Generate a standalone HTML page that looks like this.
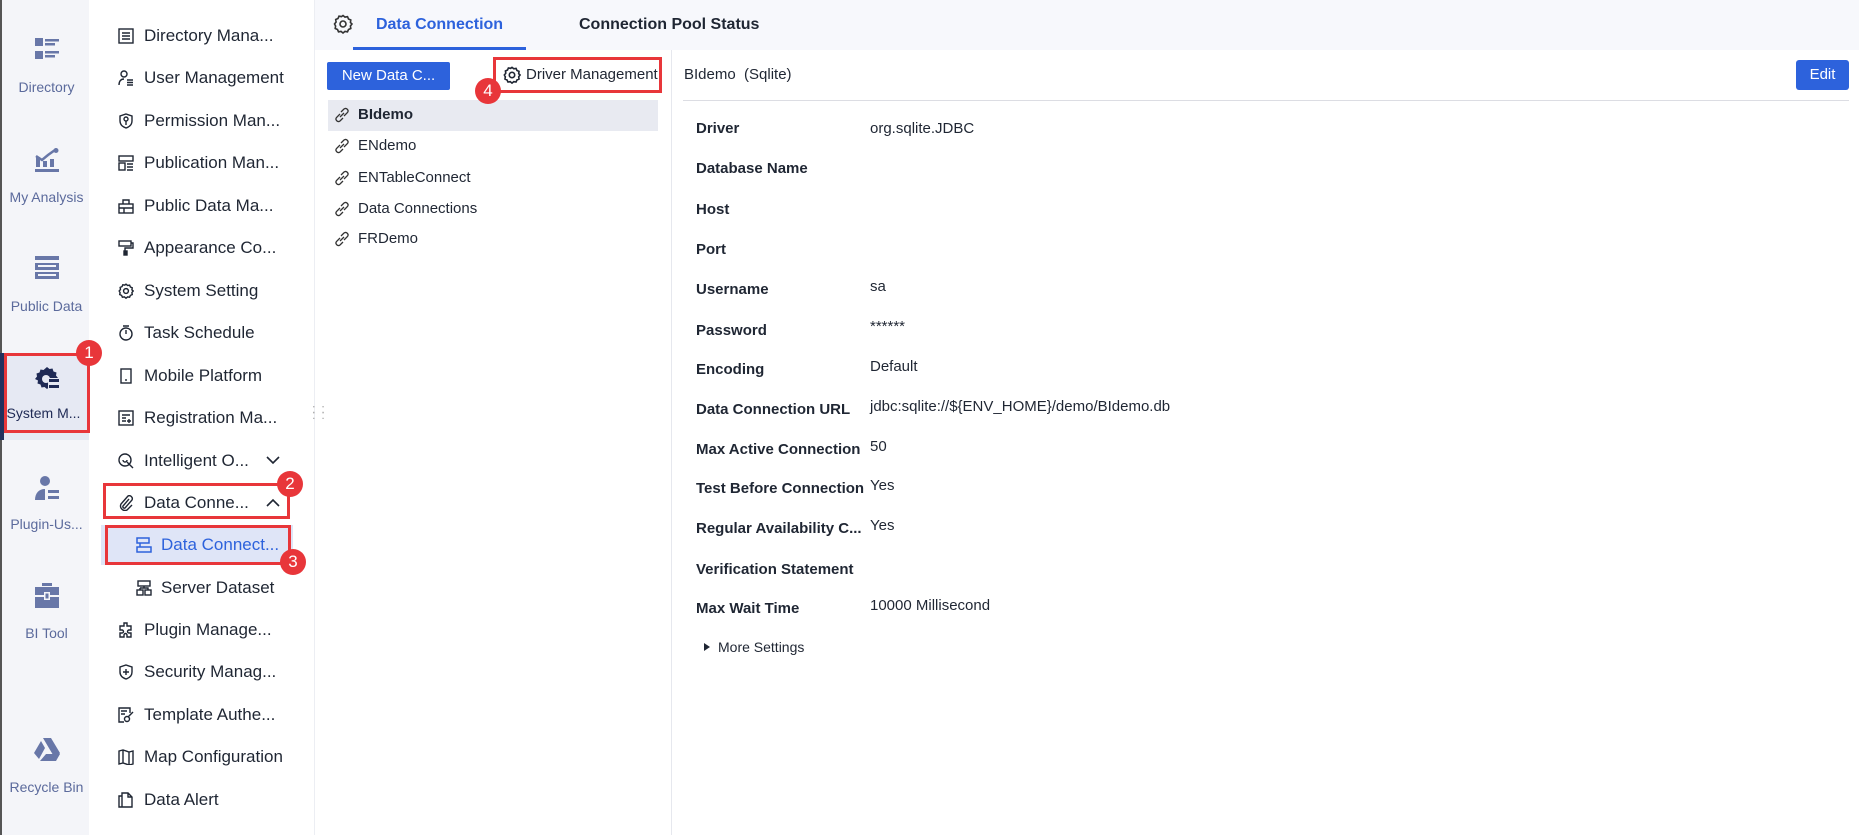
<!DOCTYPE html>
<html><head><meta charset="utf-8"><style>
*{margin:0;padding:0;box-sizing:border-box}
body{width:1859px;height:835px;overflow:hidden;background:#fff;font-family:"Liberation Sans",Arial,sans-serif;position:relative;color:#1f2633}
.abs{position:absolute}
#rail{left:0;top:0;width:89px;height:835px;background:#f4f5f9;border-left:2px solid #555}
.ri{position:absolute;left:0;width:89px;text-align:center;color:#5b6a9c;font-size:14px}
.ri svg{display:block;margin:0 auto}
#side{left:89px;top:0;width:226px;height:835px;background:#fff;border-right:1px solid #eceef3}
.si{position:absolute;left:0;width:226px;height:30px;font-size:17px;line-height:30px;white-space:nowrap}
.si svg{position:absolute;left:29px;top:7px}
.si span{position:absolute;left:55px}
.badge{position:absolute;width:26px;height:26px;border-radius:50%;background:#e8363a;color:#fff;font-size:17px;line-height:26px;text-align:center}
.rbox{position:absolute;border:3px solid #e8363a}
.li{position:absolute;left:328px;width:330px;height:30px;font-size:15px;line-height:30px}
.li svg{position:absolute;left:6px;top:7px}
.li span{position:absolute;left:30px}
.row{position:absolute;left:696px;font-size:15px}
.row b{position:absolute;left:0;white-space:nowrap}
.row i{position:absolute;left:174px;font-style:normal;white-space:nowrap}
</style></head><body>
<div class="abs" style="left:0;top:0;width:1859px;height:3px;background:linear-gradient(#e9eaee,#f7f8fc)"></div>
<!-- tab bar -->
<div class="abs" style="left:315px;top:0;width:1544px;height:50px;background:#f7f8fc"></div>
<svg class="abs" style="left:333px;top:14px" width="20" height="20" viewBox="0 0 20 20" fill="none" stroke="#333" stroke-width="1.6"><path d="M10 1.5l2 1.6 2.5-.4 1 2.3 2.3 1-.4 2.5 1.6 1.5-1.6 2 .4 2.5-2.3 1-1 2.3-2.5-.4-2 1.6-2-1.6-2.5.4-1-2.3-2.3-1 .4-2.5L1.5 10l1.6-2-.4-2.5 2.3-1 1-2.3 2.5.4z"/><circle cx="10" cy="10" r="3"/></svg>
<div class="abs" style="left:353px;top:16px;width:173px;text-align:center;font-size:16px;font-weight:bold;color:#2d62dc">Data Connection</div>
<div class="abs" style="left:353px;top:47px;width:173px;height:3px;background:#2d62dc"></div>
<div class="abs" style="left:579px;top:16px;font-size:16px;font-weight:bold;color:#1f2633">Connection Pool Status</div>

<!-- rail -->
<div class="abs" id="rail">
<div class="abs" style="left:-2px;top:353px;width:89px;height:87px;background:#e6e9f3"></div>
<div class="abs" style="left:-2px;top:353px;width:4px;height:87px;background:#22305e"></div>
<div class="ri" style="top:38px"><svg width="24" height="22" viewBox="0 0 24 22" fill="#6877a8"><rect x="0" y="0" width="8" height="8"/><rect x="0" y="13" width="8" height="8"/><rect x="10" y="1" width="14" height="2.5"/><rect x="10" y="5" width="10" height="2.5"/><rect x="10" y="13" width="14" height="2.5"/><rect x="10" y="17" width="10" height="2.5"/></svg><div style="margin-top:19px">Directory</div></div>
<div class="ri" style="top:148px"><svg width="24" height="24" viewBox="0 0 24 24" fill="#6877a8"><rect x="0" y="21" width="24" height="3"/><rect x="1" y="9" width="4" height="10"/><rect x="8" y="13" width="4" height="6"/><rect x="15" y="11" width="4" height="8"/><path d="M1 8l6 4 6-5 7-5" stroke="#6877a8" stroke-width="2.5" fill="none"/><circle cx="21" cy="2.5" r="2.5"/></svg><div style="margin-top:17px">My Analysis</div></div>
<div class="ri" style="top:256px"><svg width="24" height="24" viewBox="0 0 24 24" fill="#6877a8"><rect x="0" y="0" width="24" height="4"/><rect x="0" y="7" width="24" height="7"/><rect x="3" y="9" width="18" height="2" fill="#f4f5f9"/><rect x="0" y="16" width="24" height="7"/><rect x="3" y="18" width="18" height="2" fill="#f4f5f9"/></svg><div style="margin-top:18px">Public Data</div></div>
<div class="ri" style="top:366px;color:#1f2a55;font-size:14px"><svg width="26" height="26" viewBox="0 0 26 26"><path d="M13 1l2.5 2 3-.5 1 3 3 1-.5 3 2 2.5-2 2.5.5 3-3 1-1 3-3-.5-2.5 2-2.5-2-3 .5-1-3-3-1 .5-3L1 13l2-2.5-.5-3 3-1 1-3 3 .5z" fill="#1f2a55"/><circle cx="12" cy="13" r="4" fill="#e6e9f3"/><rect x="14" y="12" width="12" height="14" fill="#e6e9f3"/><rect x="15" y="13" width="10" height="3" fill="#1f2a55"/><rect x="15" y="19" width="10" height="3" fill="#1f2a55"/></svg><div style="margin-top:13px;margin-left:-6px;white-space:nowrap">System M...</div></div>
<div class="ri" style="top:475px"><svg width="24" height="26" viewBox="0 0 24 26" fill="#6877a8"><circle cx="10" cy="6" r="5"/><path d="M0 25c0-7 4-11 10-11v11z"/><rect x="13" y="15" width="11" height="3"/><rect x="13" y="21" width="11" height="3"/></svg><div style="margin-top:15px">Plugin-Us...</div></div>
<div class="ri" style="top:583px"><svg width="24" height="26" viewBox="0 0 24 26" fill="#6877a8"><rect x="7" y="0" width="10" height="3"/><rect x="0" y="4" width="24" height="8"/><rect x="0" y="14" width="24" height="11"/><rect x="9" y="9" width="6" height="8" fill="#f4f5f9"/><rect x="10.5" y="10.5" width="3" height="5"/></svg><div style="margin-top:16px">BI Tool</div></div>
<div class="ri" style="top:738px"><svg width="26" height="24" viewBox="0 0 26 24" fill="#6877a8"><path d="M9 0h8l9 15-4 7z M7 3l4 7-6 11L0 15z M12 16h14l-4 7H6z"/></svg><div style="margin-top:17px">Recycle Bin</div></div>
</div>

<!-- side menu -->
<div class="abs" id="side">
<div class="abs" style="left:12px;top:525px;width:192px;height:40px;background:#dfe5f7"></div>
<div class="si" style="top:21px"><svg width="16" height="16" viewBox="0 0 16 16" fill="none" stroke="#1f2633" stroke-width="1.4"><rect x="1" y="1" width="14" height="14"/><path d="M4 5h8M4 8h8M4 11h8"/></svg><span>Directory Mana...</span></div>
<div class="si" style="top:63px"><svg width="16" height="16" viewBox="0 0 16 16" fill="none" stroke="#1f2633" stroke-width="1.4"><circle cx="6" cy="4" r="3"/><path d="M1 15c0-4 2-6 5-6M9 10h6M9 12.5h6M9 15h6"/></svg><span>User Management</span></div>
<div class="si" style="top:106px"><svg width="16" height="16" viewBox="0 0 16 16" fill="none" stroke="#1f2633" stroke-width="1.4"><path d="M8 1l6 2v5c0 4-3 6-6 7-3-1-6-3-6-7V3z"/><circle cx="8" cy="6" r="2"/><path d="M8 8v4"/></svg><span>Permission Man...</span></div>
<div class="si" style="top:148px"><svg width="16" height="16" viewBox="0 0 16 16" fill="none" stroke="#1f2633" stroke-width="1.4"><rect x="1" y="1" width="14" height="5"/><rect x="1" y="8" width="6" height="7"/><path d="M9 9h6M9 12h6M9 15h6"/></svg><span>Publication Man...</span></div>
<div class="si" style="top:191px"><svg width="16" height="16" viewBox="0 0 16 16" fill="none" stroke="#1f2633" stroke-width="1.4"><rect x="1" y="6" width="14" height="9"/><path d="M5 6V2h6v4M1 10h14M6 10v5"/></svg><span>Public Data Ma...</span></div>
<div class="si" style="top:233px"><svg width="16" height="16" viewBox="0 0 16 16" fill="none" stroke="#1f2633" stroke-width="1.4"><rect x="1" y="1" width="12" height="5"/><path d="M13 3h2v5H7v3"/><rect x="6" y="11" width="3" height="4" fill="#1f2633"/></svg><span>Appearance Co...</span></div>
<div class="si" style="top:276px"><svg width="16" height="16" viewBox="0 0 20 20" fill="none" stroke="#1f2633" stroke-width="1.8"><path d="M10 1.5l2 1.6 2.5-.4 1 2.3 2.3 1-.4 2.5 1.6 1.5-1.6 2 .4 2.5-2.3 1-1 2.3-2.5-.4-2 1.6-2-1.6-2.5.4-1-2.3-2.3-1 .4-2.5L1.5 10l1.6-2-.4-2.5 2.3-1 1-2.3 2.5.4z"/><circle cx="10" cy="10" r="3"/></svg><span>System Setting</span></div>
<div class="si" style="top:318px"><svg width="16" height="16" viewBox="0 0 16 16" fill="none" stroke="#1f2633" stroke-width="1.4"><circle cx="8" cy="9" r="6"/><path d="M5 1h6M8 5v4"/></svg><span>Task Schedule</span></div>
<div class="si" style="top:361px"><svg width="16" height="16" viewBox="0 0 16 16" fill="none" stroke="#1f2633" stroke-width="1.4"><rect x="3" y="1" width="10" height="14"/><path d="M7 12h2"/></svg><span>Mobile Platform</span></div>
<div class="si" style="top:403px"><svg width="16" height="16" viewBox="0 0 16 16" fill="none" stroke="#1f2633" stroke-width="1.4"><rect x="1" y="1" width="14" height="14"/><path d="M4 5h8M4 8h4M4 11h4M11 9v4M9 11h4"/></svg><span>Registration Ma...</span></div>
<div class="si" style="top:446px"><svg width="16" height="16" viewBox="0 0 16 16" fill="none" stroke="#1f2633" stroke-width="1.4"><circle cx="7" cy="7" r="6"/><path d="M5 7a2 2 0 104 0M9 9l6 6"/></svg><span>Intelligent O...</span><svg style="left:177px;top:10px" width="14" height="9" viewBox="0 0 14 9" fill="none" stroke="#1f2633" stroke-width="1.6"><path d="M1 1l6 6 6-6"/></svg></div>
<div class="si" style="top:488px"><svg width="16" height="16" viewBox="0 0 16 16" fill="none" stroke="#1f2633" stroke-width="1.4"><path d="M11 4L5 11a1.5 1.5 0 002 2l7-8a3 3 0 00-4-4L3 9a4.5 4.5 0 006 6l5-5"/></svg><span>Data Conne...</span><svg style="left:177px;top:10px" width="14" height="9" viewBox="0 0 14 9" fill="none" stroke="#1f2633" stroke-width="1.6"><path d="M1 8l6-6 6 6"/></svg></div>
<div class="si" style="top:530px;color:#2d62dc"><svg style="left:47px" width="16" height="16" viewBox="0 0 16 16" fill="none" stroke="#2d62dc" stroke-width="1.5"><rect x="1" y="1" width="12" height="5"/><rect x="1" y="10" width="14" height="5"/><path d="M4 6v4"/></svg><span style="left:72px">Data Connect...</span></div>
<div class="si" style="top:573px"><svg style="left:47px" width="16" height="16" viewBox="0 0 16 16" fill="none" stroke="#1f2633" stroke-width="1.4"><rect x="2" y="1" width="12" height="5"/><rect x="1" y="10" width="6" height="5"/><rect x="9" y="10" width="6" height="5"/><path d="M8 6v2M4 8h8v2M4 8v2"/></svg><span style="left:72px">Server Dataset</span></div>
<div class="si" style="top:615px"><svg width="16" height="16" viewBox="0 0 16 16" fill="none" stroke="#1f2633" stroke-width="1.4"><path d="M6 1h3v3h4v4h-2a1.5 1.5 0 000 3h2v4H9v-2a1.5 1.5 0 00-3 0v2H2v-4h2a1.5 1.5 0 000-3H2V4h4z"/></svg><span>Plugin Manage...</span></div>
<div class="si" style="top:657px"><svg width="16" height="16" viewBox="0 0 16 16" fill="none" stroke="#1f2633" stroke-width="1.4"><path d="M8 1l6 2v5c0 4-3 6-6 7-3-1-6-3-6-7V3z"/><path d="M8 5v6M5 8h6"/></svg><span>Security Manag...</span></div>
<div class="si" style="top:700px"><svg width="16" height="16" viewBox="0 0 16 16" fill="none" stroke="#1f2633" stroke-width="1.4"><path d="M12 6V1H1v14h5M3 4h6M3 7h4"/><circle cx="9" cy="12" r="2.5"/><path d="M10 10l5-5"/></svg><span>Template Authe...</span></div>
<div class="si" style="top:742px"><svg width="16" height="16" viewBox="0 0 16 16" fill="none" stroke="#1f2633" stroke-width="1.4"><path d="M1 2l4-1 6 2 4-1v13l-4 1-6-2-4 1zM5 1v13M11 3v13"/></svg><span>Map Configuration</span></div>
<div class="si" style="top:785px"><svg width="16" height="16" viewBox="0 0 16 16" fill="none" stroke="#1f2633" stroke-width="1.4"><path d="M4 4V1h6l4 4v10H4zM4 4H1v11h3M10 1v4h4"/></svg><span>Data Alert</span></div>
</div>
<div class="abs" style="left:312px;top:406px;font-size:13px;color:#aaa;letter-spacing:1px;line-height:6px">: :<br>: :</div>

<!-- middle -->
<div class="abs" style="left:671px;top:50px;width:1px;height:785px;background:#e6e8ee"></div>
<div class="abs" style="left:327px;top:62px;width:123px;height:28px;background:#2d62dc;border-radius:2px;color:#fff;font-size:15px;line-height:28px;text-align:center">New Data C...</div>
<svg class="abs" style="left:503px;top:66px" width="18" height="18" viewBox="0 0 20 20" fill="none" stroke="#1f2633" stroke-width="1.8"><path d="M10 1.5l2 1.6 2.5-.4 1 2.3 2.3 1-.4 2.5 1.6 1.5-1.6 2 .4 2.5-2.3 1-1 2.3-2.5-.4-2 1.6-2-1.6-2.5.4-1-2.3-2.3-1 .4-2.5L1.5 10l1.6-2-.4-2.5 2.3-1 1-2.3 2.5.4z"/><circle cx="10" cy="10" r="3"/></svg>
<div class="abs" style="left:526px;top:66px;font-size:15px;color:#1f2633">Driver Management</div>
<div class="abs" style="left:328px;top:100px;width:330px;height:31px;background:#e8eaf1"></div>
<div class="li" style="top:100px;font-weight:bold"><svg width="16" height="16" viewBox="0 0 16 16" fill="none" stroke="#333" stroke-width="1.3"><path d="M7 5l3-3a2.5 2.5 0 013.5 3.5L10 9M9 11l-3 3A2.5 2.5 0 012.5 10.5L6 7M6 10l4-4"/></svg><span>BIdemo</span></div>
<div class="li" style="top:131px"><svg width="16" height="16" viewBox="0 0 16 16" fill="none" stroke="#333" stroke-width="1.3"><path d="M7 5l3-3a2.5 2.5 0 013.5 3.5L10 9M9 11l-3 3A2.5 2.5 0 012.5 10.5L6 7M6 10l4-4"/></svg><span>ENdemo</span></div>
<div class="li" style="top:163px"><svg width="16" height="16" viewBox="0 0 16 16" fill="none" stroke="#333" stroke-width="1.3"><path d="M7 5l3-3a2.5 2.5 0 013.5 3.5L10 9M9 11l-3 3A2.5 2.5 0 012.5 10.5L6 7M6 10l4-4"/></svg><span>ENTableConnect</span></div>
<div class="li" style="top:194px"><svg width="16" height="16" viewBox="0 0 16 16" fill="none" stroke="#333" stroke-width="1.3"><path d="M7 5l3-3a2.5 2.5 0 013.5 3.5L10 9M9 11l-3 3A2.5 2.5 0 012.5 10.5L6 7M6 10l4-4"/></svg><span>Data Connections</span></div>
<div class="li" style="top:224px"><svg width="16" height="16" viewBox="0 0 16 16" fill="none" stroke="#333" stroke-width="1.3"><path d="M7 5l3-3a2.5 2.5 0 013.5 3.5L10 9M9 11l-3 3A2.5 2.5 0 012.5 10.5L6 7M6 10l4-4"/></svg><span>FRDemo</span></div>

<!-- right -->
<div class="abs" style="left:684px;top:66px;font-size:15px;color:#1f2633">BIdemo&nbsp;&nbsp;(Sqlite)</div>
<div class="abs" style="left:1796px;top:60px;width:53px;height:30px;background:#2d62dc;border-radius:3px;color:#fff;font-size:15px;line-height:30px;text-align:center">Edit</div>
<div class="abs" style="left:683px;top:100px;width:1166px;height:1px;background:#dcdde3"></div>
<div class="row" style="top:120px"><b>Driver</b><i>org.sqlite.JDBC</i></div>
<div class="row" style="top:160px"><b>Database Name</b></div>
<div class="row" style="top:201px"><b>Host</b></div>
<div class="row" style="top:241px"><b>Port</b></div>
<div class="row" style="top:281px"><b>Username</b><i style="top:-3px">sa</i></div>
<div class="row" style="top:322px"><b>Password</b><i style="top:-4px">******</i></div>
<div class="row" style="top:361px"><b>Encoding</b><i style="top:-3px">Default</i></div>
<div class="row" style="top:401px"><b>Data Connection URL</b><i style="top:-3px">jdbc:sqlite://${ENV_HOME}/demo/BIdemo.db</i></div>
<div class="row" style="top:441px"><b>Max Active Connection</b><i style="top:-3px">50</i></div>
<div class="row" style="top:480px"><b>Test Before Connection</b><i style="top:-3px">Yes</i></div>
<div class="row" style="top:520px"><b>Regular Availability C...</b><i style="top:-3px">Yes</i></div>
<div class="row" style="top:561px"><b>Verification Statement</b></div>
<div class="row" style="top:600px"><b>Max Wait Time</b><i style="top:-3px">10000 Millisecond</i></div>
<div class="abs" style="left:704px;top:643px;width:0;height:0;border-left:6px solid #1f2633;border-top:4px solid transparent;border-bottom:4px solid transparent"></div>
<div class="abs" style="left:718px;top:639px;font-size:14px;color:#1f2633">More Settings</div>

<!-- annotations -->
<div class="rbox" style="left:4px;top:353px;width:86px;height:80px"></div>
<div class="rbox" style="left:103px;top:483px;width:187px;height:36px"></div>
<div class="rbox" style="left:105px;top:525px;width:186px;height:40px"></div>
<div class="rbox" style="left:493px;top:57px;width:169px;height:36px"></div>
<div class="badge" style="left:76px;top:340px">1</div>
<div class="badge" style="left:277px;top:471px">2</div>
<div class="badge" style="left:280px;top:549px">3</div>
<div class="badge" style="left:475px;top:78px">4</div>
</body></html>
